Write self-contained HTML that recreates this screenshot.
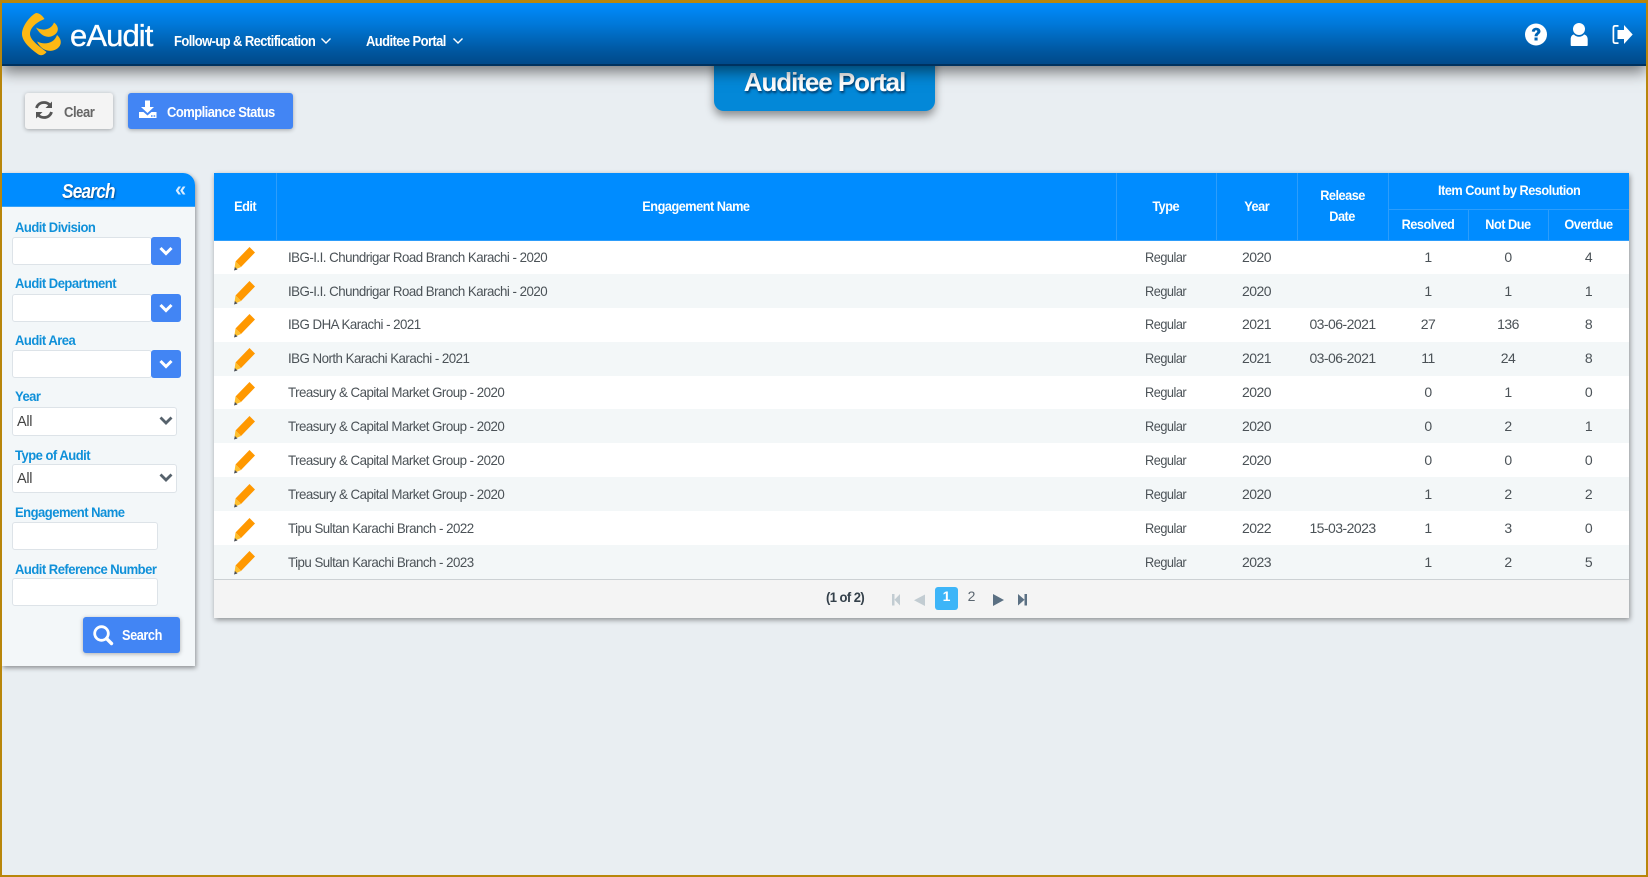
<!DOCTYPE html>
<html><head><meta charset="utf-8"><style>
html,body{margin:0;padding:0;width:1648px;height:877px;overflow:hidden;background:#e9eef2;font-family:"Liberation Sans",sans-serif}
.a{position:absolute}
.gold{position:absolute;background:#b8860b;z-index:50}
.t{position:absolute;white-space:nowrap;line-height:18px;height:18px;transform-origin:0 50%}
.lab{position:absolute;left:15px;color:#0f90d9;font-size:14px;font-weight:bold;letter-spacing:-.55px;line-height:18px;white-space:nowrap;transform:scaleX(.93);transform-origin:0 50%}
.inp{position:absolute;background:#fff;border:1px solid #dde3e8;border-radius:3px;box-sizing:border-box}
.dd{position:absolute;left:151px;width:30px;height:28px;background:#4285f4;border-radius:3px}
table{position:absolute;left:214px;top:173px;width:1415px;border-collapse:collapse;table-layout:fixed;font-size:14px;letter-spacing:-.55px}
th{background:#008cff;color:#fff;font-weight:bold;border:1px solid #2d9dfb;padding:0 0 1px;text-align:center;line-height:21px;box-sizing:border-box}
th[rowspan]{padding:0}
tr:first-child th{border-top:0}
th:last-child{border-right:0}
tr:first-child th:first-child{border-left:0}
th span{display:inline-block;transform:scaleX(.91);white-space:nowrap}
td{padding:0 0 .5px;height:33.9px;color:#4b5257;text-align:center;border:0;box-sizing:border-box}
td span{display:inline-block;white-space:nowrap}
td.r span{transform:scaleX(.91)}
tr.e td{background:#f3f7f8}
tr.o td{background:#fff}
td.n{text-align:left;padding-left:12px}
td.n span{transform:scaleX(.95);transform-origin:0 50%}
</style></head><body>
<div class="gold" style="left:0;top:0;width:1648px;height:3px"></div>
<div class="gold" style="left:0;top:0;width:2px;height:877px"></div>
<div class="gold" style="left:1646px;top:0;width:2px;height:877px"></div>
<div class="gold" style="left:0;top:875px;width:1648px;height:2px"></div>

<!-- title tab -->
<div class="a" style="left:714px;top:50px;width:221px;height:61px;background:#0388d8;border-radius:0 0 10px 10px;box-shadow:0 5px 9px rgba(0,0,0,.4)"></div>
<div class="t" style="left:714px;top:66px;width:221px;height:32px;line-height:32px;text-align:center;color:#fff;font-size:26px;font-weight:bold;letter-spacing:-1.05px;text-shadow:1px 2px 2px rgba(0,40,80,.8)">Auditee Portal</div>

<!-- header -->
<div class="a" style="left:2px;top:3px;width:1644px;height:63px;box-sizing:border-box;background:linear-gradient(#008cff 0%,#0078d8 35%,#00569e 80%,#004a8a 100%);border-bottom:2px solid #00325f;box-shadow:0 6px 14px rgba(0,0,0,.5);z-index:10"></div>
<svg class="a" style="left:0;top:0;z-index:11" width="70" height="66" viewBox="0 0 70 66">
<path d="M36 13 C39 13 42 15 44.500 19 C37 22 30.500 27 30 33.500 C29.700 40 39 46 46.500 52 C44.500 55 41 56 38.500 54.500 C32 50 22 42 22 34 C22 26 30 16 36 13Z" fill="#fdb813"/>
<path d="M36 27.500 C42 31 51 30.500 54 22.500 C60 27 59 34 51 36.500 C45 38 39.500 34 36 27.500Z" fill="#fdb813"/>
<path d="M37 41.500 C44 45 54 44 57 35 C63 40 62 48 53 50.500 C46 52 40 48 37 41.500Z" fill="#fdb813"/>
</svg>
<div class="t" style="left:70px;top:18px;height:36px;line-height:36px;color:#fff;font-size:31px;letter-spacing:-.9px;-webkit-text-stroke:.35px #fff;z-index:11">eAudit</div>
<div class="t" style="left:174px;top:33px;color:#fff;font-size:14.5px;font-weight:bold;letter-spacing:-.65px;transform:scaleX(.895);z-index:11">Follow-up &amp; Rectification</div>
<svg class="a" style="left:320px;top:36px;z-index:11" width="12" height="10" viewBox="0 0 12 10"><path d="M1.5 2.5 L6 7 L10.500 2.500" fill="none" stroke="#fff" stroke-width="1.4"/></svg>
<div class="t" style="left:366px;top:33px;color:#fff;font-size:14.5px;font-weight:bold;letter-spacing:-.65px;transform:scaleX(.895);z-index:11">Auditee Portal</div>
<svg class="a" style="left:452px;top:36px;z-index:11" width="12" height="10" viewBox="0 0 12 10"><path d="M1.5 2.5 L6 7 L10.500 2.500" fill="none" stroke="#fff" stroke-width="1.4"/></svg>

<!-- header right icons -->
<svg class="a" style="left:1520px;top:20px;z-index:11" width="126" height="30" viewBox="0 0 126 30">
<circle cx="16" cy="14.500" r="11" fill="#fff"/>
<path d="M11.800 11.500 C12 8.700 14.200 7.700 16.200 7.700 C18.700 7.700 20.500 9.200 20.500 11.300 C20.500 14 17.600 14.200 17.600 16.300 H14.600 C14.600 13 17.300 12.900 17.300 11.400 C17.300 10.700 16.800 10.300 16.100 10.300 C15.300 10.300 14.800 10.800 14.700 11.900Z" fill="#0064b4"/>
<rect x="14.500" y="17.500" width="3.100" height="3" fill="#0064b4"/>
<circle cx="59" cy="9" r="6" fill="#fff"/>
<path d="M51.500 26 C51 26 50.700 25.500 50.700 25 V19.500 C50.700 16.500 52 14.700 54 14.500 C55 16 57 16.700 59 16.700 C61 16.700 63 16 64 14.500 C66 14.700 67.700 16.500 67.700 19.500 V25 C67.700 25.500 67.400 26 67 26Z" fill="#fff"/>
<path d="M98.500 5.900 H95 C93.700 5.900 93.400 7 93.400 8 V21 C93.400 22 93.700 23.100 95 23.100 H98.500" fill="none" stroke="#fff" stroke-width="1.700"/>
<path d="M97.500 10 H104 V5 L112.700 14.500 L104 24 V19 H97.500Z" fill="#fff"/>
</svg>

<!-- toolbar -->
<div class="a" style="left:25px;top:93px;width:88px;height:36px;background:#f4f4f4;border-radius:3px;box-shadow:0 1px 4px rgba(0,0,0,.3)"></div>
<svg class="a" style="left:34px;top:100px" width="20" height="20" viewBox="0 0 20 20">
<path d="M2.5 8 C3.5 4.5 6.5 2.5 10 2.5 C12.5 2.5 14.5 3.5 15.8 5" fill="none" stroke="#555" stroke-width="2.8"/>
<path d="M18 1.5 V8 H11.5Z" fill="#555"/>
<path d="M17.5 12 C16.5 15.5 13.5 17.5 10 17.5 C7.5 17.5 5.5 16.5 4.2 15" fill="none" stroke="#555" stroke-width="2.8"/>
<path d="M2 18.5 V12 H8.5Z" fill="#555"/>
</svg>
<div class="t" style="left:64px;top:104px;color:#666;font-size:14.5px;font-weight:bold;letter-spacing:-.5px;transform:scaleX(.9)">Clear</div>
<div class="a" style="left:128px;top:93px;width:165px;height:36px;background:#4285f4;border-radius:3px;box-shadow:0 1px 4px rgba(0,0,0,.3)"></div>
<svg class="a" style="left:138px;top:100px" width="20" height="20" viewBox="0 0 20 20">
<path d="M7 0.5 H12 V7 H16 L9.5 13 L3 7 H7Z" fill="#fff"/>
<path d="M1 12 H5.5 L9.5 15.5 L13.5 12 H18.5 V18 H1Z" fill="#fff"/>
<rect x="13" y="15.3" width="1.6" height="1.4" fill="#4285f4"/><rect x="15.6" y="15.3" width="1.6" height="1.4" fill="#4285f4"/>
</svg>
<div class="t" style="left:167px;top:104px;color:#fff;font-size:14.5px;font-weight:bold;letter-spacing:-.6px;transform:scaleX(.895)">Compliance Status</div>

<!-- search panel -->
<div class="a" style="left:2px;top:173px;width:193px;height:493px;background:#f3f7f9;border-radius:0 12px 0 0;box-shadow:1px 2px 5px rgba(0,0,0,.4)"></div>
<div class="a" style="left:2px;top:173px;width:193px;height:34px;background:#008cff;border-radius:0 12px 0 0;border-bottom:1px solid #39a3f8;box-sizing:border-box"></div>
<div class="t" style="left:62px;top:180px;height:24px;line-height:24px;color:#fff;font-size:20px;font-style:italic;font-weight:bold;letter-spacing:-.9px;text-shadow:1px 1px 2px rgba(0,40,80,.7);transform:scaleX(.86)">Search</div>
<div class="t" style="left:175px;top:179px;height:24px;line-height:22px;color:#d8ecff;font-size:20px;font-weight:bold">«</div>

<div class="lab" style="top:218px">Audit Division</div>
<div class="inp" style="left:12px;top:237px;width:140px;height:28px"></div>
<div class="dd" style="top:237px"></div>
<div class="lab" style="top:274px">Audit Department</div>
<div class="inp" style="left:12px;top:294px;width:140px;height:28px"></div>
<div class="dd" style="top:294px"></div>
<div class="lab" style="top:331px">Audit Area</div>
<div class="inp" style="left:12px;top:350px;width:140px;height:28px"></div>
<div class="dd" style="top:350px"></div>
<svg class="a" style="left:151px;top:237px" width="30" height="141" viewBox="0 0 30 141">
<g fill="none" stroke="#fff" stroke-width="3"><path d="M9.5 11 L15 16.500 L20.500 11"/><path d="M9.5 68 L15 73.500 L20.500 68"/><path d="M9.5 124 L15 129.500 L20.500 124"/></g>
</svg>
<div class="lab" style="top:387px">Year</div>
<div class="inp" style="left:12px;top:407px;width:165px;height:29px"></div>
<div class="t" style="left:17px;top:413px;color:#444;font-size:14.5px;letter-spacing:-.3px">All</div>
<div class="lab" style="top:446px">Type of Audit</div>
<div class="inp" style="left:12px;top:464px;width:165px;height:29px"></div>
<div class="t" style="left:17px;top:470px;color:#444;font-size:14.5px;letter-spacing:-.3px">All</div>
<svg class="a" style="left:158px;top:414px" width="16" height="70" viewBox="0 0 16 70">
<g fill="none" stroke="#56626c" stroke-width="2.8"><path d="M2.5 3.5 L8 9 L13.500 3.500"/><path d="M2.5 60.500 L8 66 L13.500 60.500"/></g>
</svg>
<div class="lab" style="top:503px">Engagement Name</div>
<div class="inp" style="left:12px;top:522px;width:146px;height:28px"></div>
<div class="lab" style="top:560px">Audit Reference Number</div>
<div class="inp" style="left:12px;top:578px;width:146px;height:28px"></div>
<div class="a" style="left:83px;top:617px;width:97px;height:36px;background:#4285f4;border-radius:3px;box-shadow:0 1px 4px rgba(0,0,0,.3)"></div>
<svg class="a" style="left:92px;top:624px" width="22" height="22" viewBox="0 0 22 22">
<circle cx="9.5" cy="9.5" r="6.8" fill="none" stroke="#fff" stroke-width="2.8"/><path d="M14.5 14.5 L19.5 19.5" stroke="#fff" stroke-width="3.4" stroke-linecap="round"/>
</svg>
<div class="t" style="left:122px;top:627px;color:#fff;font-size:14.5px;font-weight:bold;letter-spacing:-.5px;transform:scaleX(.88)">Search</div>

<!-- table shadow/footer -->
<div class="a" style="left:214px;top:173px;width:1415px;height:445px;box-shadow:1px 2px 5px rgba(0,0,0,.4)"></div>
<table>
<colgroup><col style="width:62px"><col style="width:840px"><col style="width:100px"><col style="width:81px"><col style="width:91px"><col style="width:80px"><col style="width:80px"><col style="width:81px"></colgroup>
<thead>
<tr style="height:36px"><th rowspan="2"><span>Edit</span></th><th rowspan="2"><span>Engagement Name</span></th><th rowspan="2"><span>Type</span></th><th rowspan="2"><span>Year</span></th><th rowspan="2"><span>Release</span><br><span>Date</span></th><th colspan="3"><span>Item Count by Resolution</span></th></tr>
<tr style="height:31px"><th><span>Resolved</span></th><th><span>Not Due</span></th><th><span>Overdue</span></th></tr>
</thead>
<tbody>
<tr class="o"><td></td><td class="n"><span>IBG-I.I. Chundrigar Road Branch Karachi - 2020</span></td><td class="r"><span>Regular</span></td><td>2020</td><td></td><td>1</td><td>0</td><td>4</td></tr>
<tr class="e"><td></td><td class="n"><span>IBG-I.I. Chundrigar Road Branch Karachi - 2020</span></td><td class="r"><span>Regular</span></td><td>2020</td><td></td><td>1</td><td>1</td><td>1</td></tr>
<tr class="o"><td></td><td class="n"><span>IBG DHA Karachi - 2021</span></td><td class="r"><span>Regular</span></td><td>2021</td><td>03-06-2021</td><td>27</td><td>136</td><td>8</td></tr>
<tr class="e"><td></td><td class="n"><span>IBG North Karachi Karachi - 2021</span></td><td class="r"><span>Regular</span></td><td>2021</td><td>03-06-2021</td><td>11</td><td>24</td><td>8</td></tr>
<tr class="o"><td></td><td class="n"><span>Treasury &amp; Capital Market Group - 2020</span></td><td class="r"><span>Regular</span></td><td>2020</td><td></td><td>0</td><td>1</td><td>0</td></tr>
<tr class="e"><td></td><td class="n"><span>Treasury &amp; Capital Market Group - 2020</span></td><td class="r"><span>Regular</span></td><td>2020</td><td></td><td>0</td><td>2</td><td>1</td></tr>
<tr class="o"><td></td><td class="n"><span>Treasury &amp; Capital Market Group - 2020</span></td><td class="r"><span>Regular</span></td><td>2020</td><td></td><td>0</td><td>0</td><td>0</td></tr>
<tr class="e"><td></td><td class="n"><span>Treasury &amp; Capital Market Group - 2020</span></td><td class="r"><span>Regular</span></td><td>2020</td><td></td><td>1</td><td>2</td><td>2</td></tr>
<tr class="o"><td></td><td class="n"><span>Tipu Sultan Karachi Branch - 2022</span></td><td class="r"><span>Regular</span></td><td>2022</td><td>15-03-2023</td><td>1</td><td>3</td><td>0</td></tr>
<tr class="e"><td></td><td class="n"><span>Tipu Sultan Karachi Branch - 2023</span></td><td class="r"><span>Regular</span></td><td>2023</td><td></td><td>1</td><td>2</td><td>5</td></tr>
</tbody>
</table>

<!-- pencils -->
<svg class="a" style="left:234px;top:240px" width="22" height="340" viewBox="0 0 22 340">
<defs><g id="p"><path d="M15.5 7 L21 12.500 L7 27 L1.500 21.500Z" fill="#ff9800"/><path d="M1.500 21.500 L7 27 L2.500 29 L0.500 28Z" fill="#fdc02f"/><path d="M0 30.500 L0.900 27 L3.500 29.500Z" fill="#4a4f55"/></g></defs>
<use href="#p" y="0"/><use href="#p" y="34"/><use href="#p" y="67"/><use href="#p" y="101"/><use href="#p" y="135"/><use href="#p" y="169"/><use href="#p" y="203"/><use href="#p" y="237"/><use href="#p" y="271"/><use href="#p" y="304"/>
</svg>

<!-- pagination -->
<div class="a" style="left:214px;top:579px;width:1415px;height:39px;background:#f4f4f4;border-top:1px solid #ccd1d4;box-sizing:border-box"></div>
<div class="t" style="left:826px;top:588px;color:#34404a;font-size:14px;font-weight:bold;letter-spacing:-.6px;transform:scaleX(.93)">(1 of 2)</div>
<svg class="a" style="left:888px;top:590px" width="145" height="20" viewBox="0 0 145 20">
<path d="M4 4 H6.500 V15.500 H4Z M6.500 9.800 L12 4 V15.500Z" fill="#c2ccd2"/>
<path d="M37 4.500 V16 L26 10.200Z" fill="#c2ccd2"/>
<path d="M105 4 L116 10 L105 16Z" fill="#5b7083"/>
<path d="M130 4 L136.500 9.800 V4 H139 V15.500 H136.500 V9.800 L130 15.500Z" fill="#5b7083"/>
</svg>
<div class="a" style="left:935px;top:587px;width:23px;height:23px;background:#3db5f8;border-radius:3px"></div>
<div class="t" style="left:935px;top:587px;width:23px;text-align:center;color:#fff;font-size:14px;font-weight:bold">1</div>
<div class="t" style="left:961px;top:587px;width:21px;text-align:center;color:#5b6670;font-size:14px">2</div>
</body></html>
